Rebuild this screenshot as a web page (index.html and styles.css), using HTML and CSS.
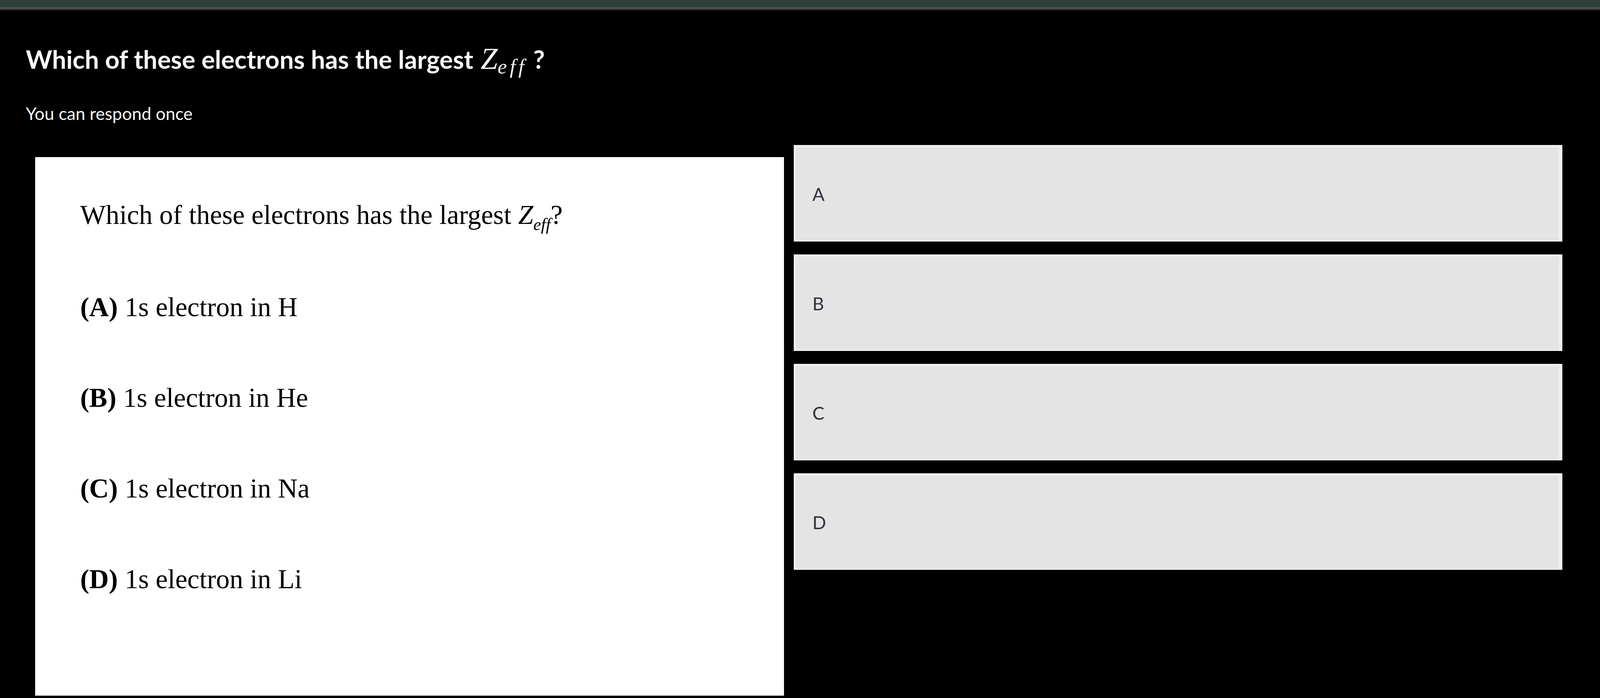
FILE: index.html
```html
<!DOCTYPE html>
<html>
<head>
    <meta charset="UTF-8">
    <title>Question</title>
    <link rel="stylesheet" href="styles.css">
</head>
<body>
    <div class="topbar"></div>
    <div class="topbar-edge"></div>

    <main class="page">
        <header class="prompt">
            <h1 class="prompt-title">Which of these electrons has the largest <span class="math"><i class="math-z">Z</i><sub class="math-sub">eff</sub></span> ?</h1>
            <p class="prompt-caption">You can respond once</p>
        </header>

        <div class="columns">
            <!-- Question card -->
            <div class="question-col">
                <div class="question-card">
                    <p class="stem">Which of these electrons has the largest <i>Z</i><sub class="stem-sub">eff</sub>?</p>
                    <p class="option"><b>(A)</b> 1s electron in H</p>
                    <p class="option"><b>(B)</b> 1s electron in He</p>
                    <p class="option"><b>(C)</b> 1s electron in Na</p>
                    <p class="option"><b>(D)</b> 1s electron in Li</p>
                </div>
            </div>

            <!-- Answer buttons -->
            <div class="choices">
                <button class="choice">A</button>
                <button class="choice">B</button>
                <button class="choice">C</button>
                <button class="choice">D</button>
            </div>
        </div>
    </main>
</body>
</html>
```

FILE: styles.css
```css
body {
    margin: 0;
    padding: 0;
    background-color: #000;
    color: #fafafa;
    font-family: Lato, "Noto Sans", sans-serif;
}
.topbar {
    height: 16px;
    background-color: #2d4139;
}
.topbar-edge {
    height: 9px;
    background: linear-gradient(#2a2a2a, #575757 45%, #4a4a4a 75%, #262626);
    border-bottom: 3px solid #111;
}
.page {
    padding: 0 2.37vw 0 1.61vw;
}

/* Header */
.prompt-title {
    margin: 73px 0 0 0;
    font-size: 1.573vw;
    font-weight: 700;
    line-height: 100px;
    height: 100px;
    white-space: nowrap;
}
.math {
    font-family: "Liberation Serif", serif;
    font-weight: 400;
    line-height: 0;
}
.math-z {
    font-size: 1.916vw;
    margin-left: 0.07vw;
}
.math-sub {
    font-size: 1.3vw;
    font-style: italic;
    letter-spacing: 0.18vw;
    line-height: 0;
    vertical-align: -0.29vw;
}
.prompt-caption {
    margin: 54px 0 0 0;
    font-size: 1.085vw;
    line-height: 70px;
}

/* Columns */
.columns {
    display: grid;
    grid-template-columns: 2622fr 2656fr;
    column-gap: 0.615vw;
    margin-top: 46px;
}
.question-col {
    padding: 31px 0 0 0.58vw;
}
.question-card {
    background-color: #fff;
    color: #000;
    height: 1346px;
    padding: 32px 0 0 2.82vw;
    font-family: "Liberation Serif", "Times New Roman", serif;
    font-size: 1.699vw;
    white-space: nowrap;
    overflow: hidden;
}
.stem, .option {
    margin: 0;
    line-height: 232px;
}
.stem {
    margin-bottom: 4px;
}
.stem-sub {
    font-size: 1.085vw;
    font-style: italic;
    line-height: 0;
    vertical-align: -0.4vw;
}

/* Choice buttons */
.choices {
    display: flex;
    flex-direction: column;
    gap: 33px;
}
.choice {
    height: 247px;
    display: flex;
    align-items: center;
    padding: 0 0 0 1.01vw;
    margin: 0;
    background-color: #e4e4e4;
    border: 6px solid #efefef;
    border-bottom-width: 3px;
    border-right-width: 8px;
    box-shadow: 1px 0 0 #8a8a8a;
    color: #31333f;
    font-family: Lato, "Noto Sans", sans-serif;
    font-size: 1.12vw;
    cursor: pointer;
}
```
